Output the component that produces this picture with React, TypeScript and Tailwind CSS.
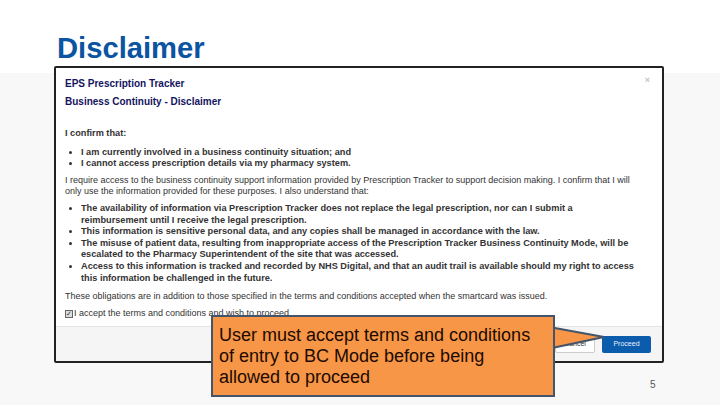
export default function App() {
  const sans = "font-['Liberation_Sans',Arial,sans-serif]";
  return (
    <div className={`relative flex h-[405px] w-[720px] flex-col overflow-hidden bg-[#f8f8f8] ${sans}`}>
      <header className="h-[73px] bg-white pl-[57px] pt-[30px]">
        <h1 className="text-[29.2px] font-bold leading-[36px] text-[#0b54a2]">Disclaimer</h1>
      </header>
      <section className="mx-[54px] mt-[-7px] flex h-[297px] w-[610px] flex-col rounded-[2px] border-2 border-[#222222] bg-white">
        <div className="relative flex-1 pl-[9px] pr-[25px] pt-[10px] text-[9.2px] leading-[11.6px] text-[#333333]">
          <span className="absolute right-[12px] top-[7px] text-[9px] font-bold leading-[10px] text-[#c4c4c4]">×</span>
          <h2 className="text-[10px] font-bold leading-[12px] text-[#14145f]">EPS Prescription Tracker</h2>
          <h2 className="mt-[6px] text-[10px] font-bold leading-[12px] text-[#14145f]">Business Continuity - Disclaimer</h2>
          <p className="mt-[20px] font-bold">I confirm that:</p>
          <ul className="ml-[16px] mt-[7px] list-disc font-bold">
            <li>I am currently involved in a business continuity situation; and</li>
            <li>I cannot access prescription details via my pharmacy system.</li>
          </ul>
          <p className="mt-[5px] text-[9px]">
            I require access to the business continuity support information provided by Prescription Tracker to support decision making. I confirm that I will only use the information provided for these purposes. I also understand that:
          </p>
          <ul className="ml-[16px] mt-[5px] list-disc font-bold">
            <li>The availability of information via Prescription Tracker does not replace the legal prescription, nor can I submit a reimbursement until I receive the legal prescription.</li>
            <li>This information is sensitive personal data, and any copies shall be managed in accordance with the law.</li>
            <li>The misuse of patient data, resulting from inappropriate access of the Prescription Tracker Business Continuity Mode, will be escalated to the Pharmacy Superintendent of the site that was accessed.</li>
            <li>Access to this information is tracked and recorded by NHS Digital, and that an audit trail is available should my right to access this information be challenged in the future.</li>
          </ul>
          <p className="mt-[7px] text-[9px]">These obligations are in addition to those specified in the terms and conditions accepted when the smartcard was issued.</p>
          <label className="mt-[5px] flex items-center gap-[1px] text-[9px]">
            <span className="flex h-[8px] w-[8px] items-center justify-center border border-[#666666] bg-[#dddddd] text-[7px] leading-none">✓</span>
            <span>I accept the terms and conditions and wish to proceed.</span>
          </label>
        </div>
        <footer className="flex h-[35px] items-center justify-end gap-[7px] border-t border-[#e5e5e5] bg-[#f5f5f5] pr-[11px]">
          <button className="h-[17px] w-[40px] rounded-[2px] border border-[#cccccc] bg-white text-[7px] text-[#333333]">Cancel</button>
          <button className="h-[17px] w-[49px] rounded-[2px] bg-[#0b5cad] text-[7px] text-[#e8f0fa]">Proceed</button>
        </footer>
      </section>
      <span className="absolute left-[650px] top-[379px] text-[10px] leading-[12px] text-[#555555]">5</span>
      <svg className="absolute left-[550px] top-[324px] h-[30px] w-[60px]" viewBox="0 0 60 30">
        <path d="M2 3.5 L54 13 L2 24 Z" fill="#f79646" stroke="#44546a" strokeWidth="2" />
        <path d="M1 5 L1 23" stroke="#f79646" strokeWidth="3" />
      </svg>
      <aside className="absolute left-[211px] top-[315px] flex h-[82px] w-[344px] items-start border-2 border-[#44546a] bg-[#f79646] pl-[6px] pt-[8px] text-[18px] leading-[21px] text-[#200a00]">
        <p>
          User must accept terms and conditions
          <br />
          of entry to BC Mode before being
          <br />
          allowed to proceed
        </p>
      </aside>
    </div>
  );
}
